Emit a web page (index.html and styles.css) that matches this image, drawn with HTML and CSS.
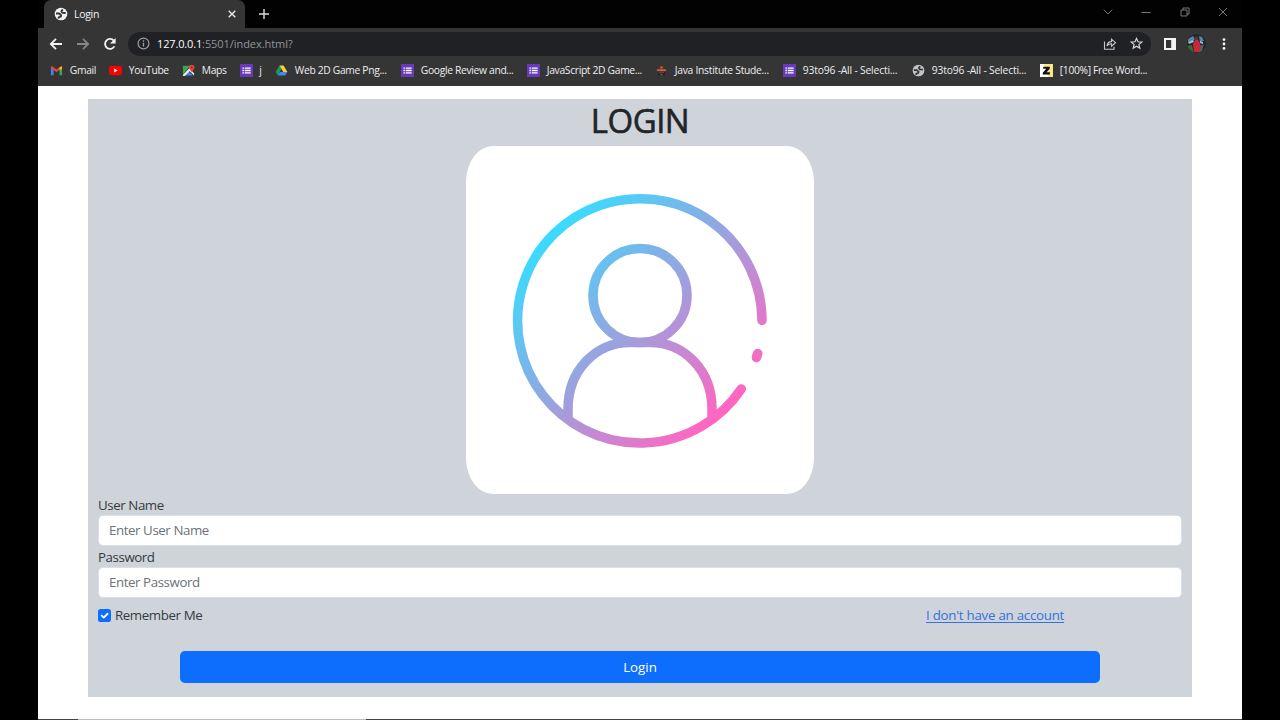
FILE: index.html
```html
<!DOCTYPE html>
<html lang="en">
<head>
<meta charset="utf-8">
<title>Login</title>
<link rel="stylesheet" href="styles.css">
</head>
<body>
<svg width="0" height="0" class="defs" aria-hidden="true">
  <symbol id="list" viewBox="0 0 14 14"><path fill="#673ab7" d="M0 0h14v14H0z"/><path stroke="#fff" stroke-width="1.5" d="M2.6 4.4h1.6M5.1 4.4h6.4M2.6 7h1.6M5.1 7h6.4M2.6 9.6h1.6M5.1 9.6h6.4"/></symbol>
  <symbol id="globe" viewBox="0 0 14 14"><circle cx="7" cy="7" r="6.3" fill="currentColor"/><path fill="none" stroke="#353536" stroke-width="1.9" stroke-linejoin="round" d="M2 6.500h3.200l1.900 1.700-.4 1.500-2 .6-.2 1.400M8.800 2.400L7.400 4.300l1.200 1.500 3.100.2"/></symbol>
</svg>
<div class="browser">
  <div class="tabstrip">
    <div class="tab">
      <svg class="tab-icon" width="14" height="14"><use href="#globe"/></svg>
      <span class="tab-title">Login</span>
      <svg class="tab-close" width="10" height="10" viewBox="0 0 10 10"><path d="M1.700 1.700l6.600 6.600M8.300 1.700L1.700 8.300" stroke="#e8eaed" stroke-width="1.400"/></svg>
    </div>
    <svg class="new-tab" width="12" height="12" viewBox="0 0 12 12"><path d="M6 1v10M1 6h10" stroke="#dcdde0" stroke-width="1.400"/></svg>
    <div class="window-buttons">
      <svg width="10" height="10" viewBox="0 0 10 10"><path d="M.8 2.700L5 7l4.200-4.300"/></svg>
      <svg width="10" height="10" viewBox="0 0 10 10"><path d="M.5 5.500h9"/></svg>
      <svg width="10" height="10" viewBox="0 0 10 10"><path d="M1 3h6v6H1zM3 3V1h6v6H7"/></svg>
      <svg width="10" height="10" viewBox="0 0 10 10"><path d="M1 1l8 8M9 1L1 9"/></svg>
    </div>
  </div>
  <div class="toolbar">
    <div class="nav">
      <svg width="14" height="14" viewBox="0 0 14 14"><path d="M13 7H2M7 1.800L1.800 7 7 12.200" stroke="#f1f3f4"/></svg>
      <svg width="14" height="14" viewBox="0 0 14 14"><path d="M1 7h11M7 1.800L12.200 7 7 12.200" stroke="#84868a"/></svg>
      <svg width="14" height="14" viewBox="0 0 14 14"><path d="M11.400 9.400a5 5 0 1 1-.6-5.800" stroke="#f1f3f4"/><path d="M12.600 .9v5.600H7z" fill="#f1f3f4" stroke="none"/></svg>
    </div>
    <div class="address">
      <svg class="info" width="13" height="13" viewBox="0 0 13 13"><circle cx="6.500" cy="6.500" r="5.400" fill="none" stroke="#9aa0a6" stroke-width="1.200"/><path d="M6.500 5.800v3.700M6.500 3.300v1.400" stroke="#9aa0a6" stroke-width="1.300"/></svg>
      <span class="url"><b>127.0.0.1</b>:5501/index.html?</span>
      <svg class="share" width="14" height="14" viewBox="0 0 14 14" fill="none" stroke="#c4c6ca" stroke-width="1.100"><path d="M1.500 4.500v7.700h9.500V9.800M4 9c.3-3 2-4.300 4.500-4.400V2.200l4 3.500-4 3.500V6.800C6.400 6.800 5 7.500 4 9z"/></svg>
      <svg class="star" width="13" height="13" viewBox="0 0 13 13"><path d="M6.500 1.400l1.500 3.400 3.700.3-2.800 2.500.9 3.700-3.300-2-3.300 2 .9-3.700L1.300 5.100 5 4.800z" fill="none" stroke="#d6d8db" stroke-width="1.200"/></svg>
    </div>
    <svg class="panel" width="12" height="12" viewBox="0 0 12 12"><path fill="#f1f3f4" d="M0 0h12v12H0z"/><path fill="#353536" d="M2 2h5.200v8H2z"/></svg>
    <svg class="avatar" width="19" height="19" viewBox="0 0 19 19"><clipPath id="round"><circle cx="9.500" cy="9.500" r="9.300"/></clipPath><g clip-path="url(#round)"><path fill="#1d2725" d="M0 0h19v19H0z"/><path fill="#4c88b4" d="M1 5l5-3 2 3-2 2-5 1zM12 2l3 1 2 4-4 1z"/><path fill="#a9b7bc" d="M1 8l5-2 1 2-5 2zM13 7l3 1v2l-3-1z"/><path fill="#3d6737" d="M0 12l5-1 2 9H1z"/><path fill="#5c5f60" d="M13 12l4-2-2 7-4 2z"/><circle cx="9.500" cy="4" r="1.800" fill="#5b2f2a"/><path fill="#c8283c" d="M8.500 5.500h2.500l2.500 4.500-.5 8H7L6 10z"/></g></svg>
    <svg class="menu" width="4" height="12" viewBox="0 0 4 12" fill="#f1f3f4"><circle cx="2" cy="1.600" r="1.400"/><circle cx="2" cy="6" r="1.400"/><circle cx="2" cy="10.400" r="1.400"/></svg>
  </div>
  <div class="bookmarks">
    <div class="bm"><svg viewBox="0 0 14 14"><path fill="#4285f4" d="M1 3.500l2.800 2V12H1z"/><path fill="#34a853" d="M10.200 5.500l2.800-2V12h-2.800z"/><path fill="#ea4335" d="M1 4V2.500h1.500L7 6l4.500-3.500H13V4L7 9z"/><path fill="#fbbc04" d="M10.200 4l2.800-1.500V5l-2.800 2z"/></svg><span>Gmail</span></div>
    <div class="bm"><svg viewBox="0 0 14 14"><rect y="2.200" width="14" height="9.800" rx="2.500" fill="#f00"/><path fill="#fff" d="M5.600 4.900v4.300L9.300 7z"/></svg><span>YouTube</span></div>
    <div class="bm"><svg viewBox="0 0 14 14"><path fill="#34a853" d="M1 2h8l-7 8-1 1z"/><path fill="#4285f4" d="M7 8l5 4.500H3z"/><path fill="#e8eaed" d="M1 11.500L9.500 3l1.500 2-8 8H1zM7.500 7L9 6l4 4v2.500z"/><path fill="#ea4335" d="M10.500.8a3 3 0 0 1 3 3c0 2-2.200 3-3 5-.8-2-3-3-3-5a3 3 0 0 1 3-3z"/><circle cx="10.500" cy="3.700" r="1" fill="#8f2820"/></svg><span>Maps</span></div>
    <div class="bm"><svg><use href="#list"/></svg><span>j</span></div>
    <div class="bm"><svg viewBox="0 0 14 14"><path fill="#0f9d58" d="M4.800 1.500L7 5.300 3 12.500.6 8.700z"/><path fill="#ffcd40" d="M4.800 1.500h4.400l4.200 7.200H9z"/><path fill="#4285f4" d="M5.100 8.700h8.300L11 12.500H3z"/></svg><span>Web 2D Game Png...</span></div>
    <div class="bm"><svg><use href="#list"/></svg><span>Google Review and...</span></div>
    <div class="bm"><svg><use href="#list"/></svg><span>JavaScript 2D Game...</span></div>
    <div class="bm"><svg viewBox="0 0 14 14"><path fill="#7c3024" d="M5 1.500l4 1V5l2.500 1-1 2h-7l-1-2L5 5z"/><path fill="#d07b54" d="M2 6h10v1.400H2zM6 3h2v1.500H6z"/><path fill="#191a1c" d="M3 8.500h8l-1 3.500H4z"/><path stroke="#a84e37" d="M4 9.500h6M5.500 11.500h3"/></svg><span class="wide">Java Institute Stude...</span></div>
    <div class="bm"><svg><use href="#list"/></svg><span class="wider">93to96 -All - Selecti...</span></div>
    <div class="bm gray"><svg><use href="#globe"/></svg><span class="wider">93to96 -All - Selecti...</span></div>
    <div class="bm"><svg viewBox="0 0 14 14"><path fill="#fff" d="M0 0h14v14H0z"/><path fill="#f8e68b" d="M4 0h10v14H9z"/><path fill="#111" d="M3.500 3h7v2L7 9h3.700v2.200H3V9.300L6.700 5H3.500z"/></svg><span>[100%] Free Word...</span></div>
  </div>
  <main class="page">
    <form class="card">
      <h1>LOGIN</h1>
      <svg class="picture" viewBox="466 146 348 348">
        <defs><linearGradient id="tint" gradientUnits="userSpaceOnUse" x1="545" y1="235" x2="722" y2="412"><stop offset="0" stop-color="#38dcff"/><stop offset=".5" stop-color="#99a3df"/><stop offset="1" stop-color="#ff66c1"/></linearGradient></defs>
        <g fill="none" stroke="url(#tint)" stroke-width="9.500" stroke-linecap="round">
          <path d="M762 320.500A122.200 122.200 0 1 0 741.300 388.900"/>
          <path d="M757.700 353.500l-1.300 4"/>
          <circle cx="640" cy="295.500" r="47"/>
          <path stroke-linecap="butt" d="M568 418v-9C568 370 596 342.500 630 342.500h20C684 342.500 712 370 712 409v9"/>
        </g>
      </svg>
      <label>User Name</label>
      <div class="field"><span>Enter User Name</span></div>
      <label>Password</label>
      <div class="field"><span>Enter Password</span></div>
      <div class="options">
        <svg class="check" width="13" height="13" viewBox="0 0 13 13"><rect width="13" height="13" rx="2.800" fill="#0d6efd"/><path d="M3.700 6.600l2 2 3.900-3.800" fill="none" stroke="#fff" stroke-width="1.900" stroke-linecap="round" stroke-linejoin="round"/></svg>
        <span class="remember">Remember Me</span>
        <a class="signup">I don't have an account</a>
      </div>
      <div class="submit"><span>Login</span></div>
    </form>
  </main>
  <div class="edge"><div class="edge-light"></div></div>
</div>
</body>
</html>
```

FILE: styles.css
```css
* { box-sizing: border-box; }
body { margin: 0; background: #000; overflow: hidden; font-family: "Open Sans", "Noto Sans", sans-serif; }
span, a { white-space: nowrap; }
svg { flex: none; display: block; }
.defs { position: absolute; }
.browser { width: 1204px; height: 720px; margin-left: 38px; display: flex; flex-direction: column; background: #fff; }
.tabstrip { height: 28px; background: #020202; display: flex; align-items: center; }
.tab { width: 201px; height: 28px; margin-left: 6px; padding: 0 8px 0 10px; display: flex; align-items: center; background: #353536; border-radius: 7px 7px 0 0; color: #f1f3f4; }
.tab-title { margin-left: 6px; font-size: 10.5px; letter-spacing: -.3px; }
.tab-close { margin-left: auto; }
.new-tab { margin-left: 13px; }
.window-buttons { margin: -4px 14px 0 auto; display: flex; gap: 28.5px; fill: none; stroke: #85868a; stroke-width: .9; }
.toolbar { height: 31px; background: #353536; display: flex; align-items: center; }
.nav { width: 90px; padding-left: 11px; display: flex; gap: 13px; fill: none; stroke-width: 1.8; }
.address { width: 1023px; height: 24px; border-radius: 12px; background: #202124; display: flex; align-items: center; padding: 0 8px 0 9px; }
.url { margin-left: 7px; font-size: 11px; color: #929599; letter-spacing: -.06px; }
.url b { font-weight: 400; color: #fff; letter-spacing: -.15px; }
.share { margin-left: auto; }
.star { margin-left: 13px; }
.panel { margin-left: 13px; }
.avatar { margin-left: 11px; }
.menu { margin-left: 16px; }
.bookmarks { height: 27px; background: #353536; padding: 0 0 5px 12px; display: grid; grid-template-columns: 59px 73px 57.5px 35.5px 126px 126px 128px 128px 129px 128px 120px; align-items: center; }
.bm { display: flex; align-items: center; gap: 6.8px; font-size: 10.3px; color: #eceef0; }
.bm svg { width: 13px; height: 13px; }
.bm.gray svg { color: #c0c3c7; }
.bm span { letter-spacing: -.33px; }
.bm .wide { letter-spacing: -.27px; }
.bm .wider { letter-spacing: -.18px; }
.page { height: 633px; padding: 13px 50px 0; }
.card { height: 598px; background: #ced4da; padding: 0 10px; display: flex; flex-direction: column; }
h1 { margin: 0; height: 47px; line-height: 43px; text-align: center; font-size: 33px; font-weight: 500; color: #212529; letter-spacing: -.5px; -webkit-text-stroke: .6px #212529; }
.picture { width: 348px; height: 348px; align-self: center; background: #fff; border-radius: 27px / 36px; }
label { height: 21px; line-height: 22px; font-size: 13.3px; letter-spacing: -.42px; color: #343a3f; }
.field { height: 31px; flex: none; border: 1px solid #dce0e5; border-radius: 5px; background: #fff; padding-left: 10px; line-height: 29px; font-size: 13.3px; letter-spacing: -.42px; color: #6d7277; }
.options { display: flex; align-items: center; height: 20px; margin-top: 7px; font-size: 13.3px; letter-spacing: -.4px; color: #343a3f; }
.remember { width: 90px; margin-left: 4px; }
.signup { margin-left: 721px; color: #3472df; letter-spacing: -.25px; text-decoration: underline; text-underline-offset: 2px; text-decoration-thickness: 1px; }
.submit { width: 920px; height: 32px; margin-top: 26px; align-self: center; border-radius: 5px; background: #0d6efd; color: #fff; text-align: center; line-height: 32px; font-size: 13.3px; }
.edge { height: 1px; background: #454547; }
.edge-light { width: 288px; height: 1px; margin-left: 40px; background: #bdbdbd; }
```
